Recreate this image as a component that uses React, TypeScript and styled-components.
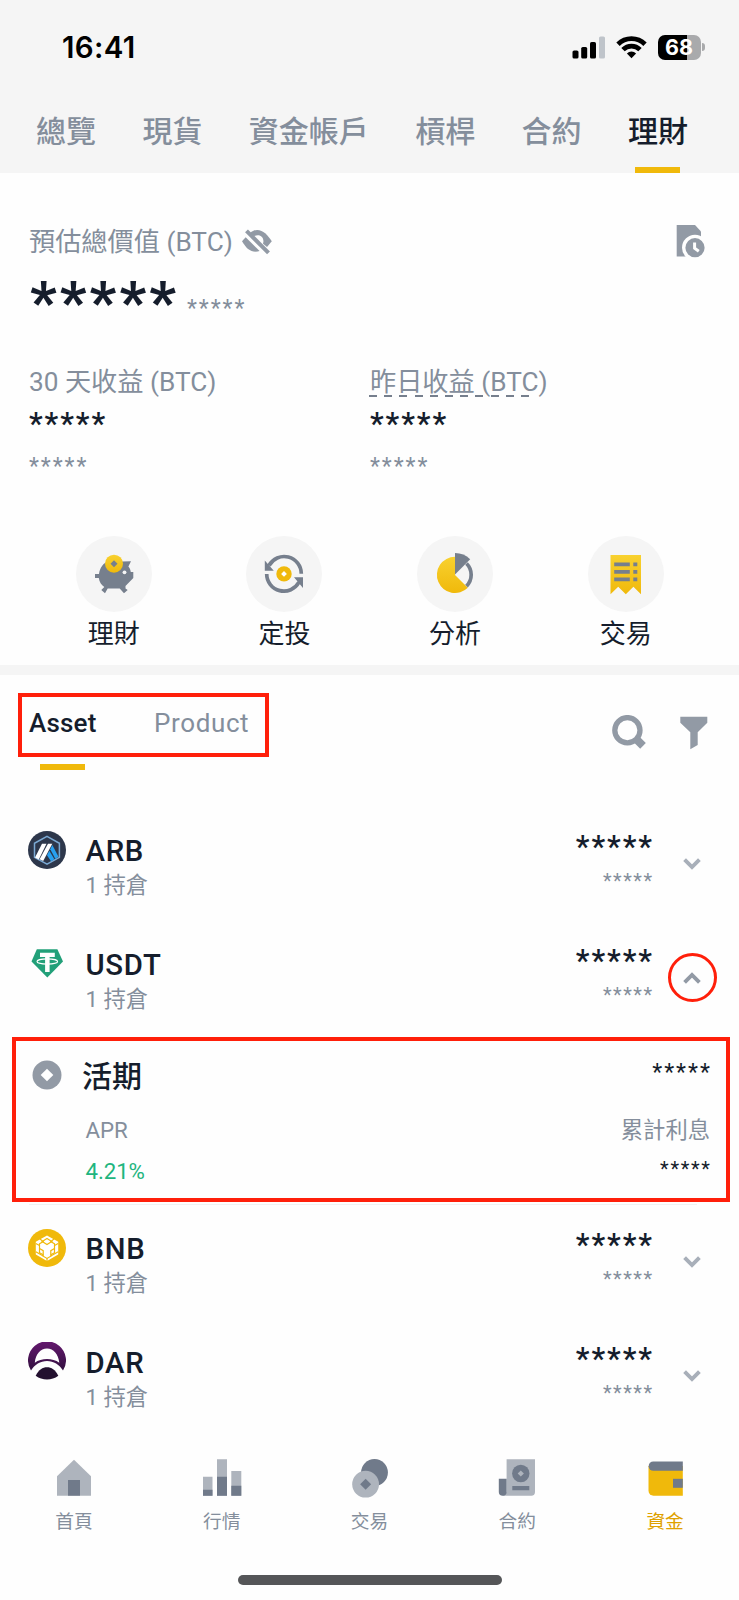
import React from "react";
import styled, { createGlobalStyle } from "styled-components";

const INK = "#151d2c";
const GREY = "#848e9c";
const ICON = "#929aa5";
const SLATE = "#767f8d";
const GOLD = "#f0b90b";
const RED = "#ff1f0a";
const PANEL = "#f5f5f5";

const GlobalStyle = createGlobalStyle`
  * { box-sizing: border-box; }
  body {
    margin: 0;
    background: #fefefe;
    color: ${INK};
    font-family: Roboto, "Noto Sans CJK TC", sans-serif;
  }
  svg { display: block; flex: none; }
`;

const Screen = styled.main`
  width: 739px;
  height: 1600px;
  overflow: hidden;
  display: flex;
  flex-direction: column;
`;

const Header = styled.header`
  height: 172.5px;
  background: ${PANEL};
`;

const StatusBar = styled.div`
  height: 94px;
  display: flex;
  justify-content: space-between;
  align-items: center;
  padding: 0 34.5px 0 62px;
`;

const Clock = styled.div`
  font: 600 29.5px/30px Inter, sans-serif;
  letter-spacing: 0.3px;
  color: #000;
`;

const StatusIcons = styled.div`
  display: flex;
  align-items: center;
  gap: 11px;
`;

const Battery = styled.div`
  display: flex;
  align-items: center;
  gap: 1px;
`;

const BatteryBody = styled.div`
  width: 43px;
  height: 25px;
  border-radius: 7px;
  background: linear-gradient(90deg, #000 68%, #a9aaac 68%);
  color: #fff;
  text-align: center;
  font: 700 21.5px/25px Inter, sans-serif;
`;

const BatteryNub = styled.div`
  width: 3px;
  height: 8px;
  border-radius: 0 4px 4px 0;
  background: #a9aaac;
`;

const AccountTabs = styled.nav`
  height: 78.5px;
  display: flex;
  gap: 46.4px;
  padding-left: 36px;
`;

const AccountTab = styled.div<{ $active?: boolean }>`
  display: flex;
  flex-direction: column;
  align-items: center;
  justify-content: space-between;
  padding-top: 16px;
  font-size: 30px;
  line-height: 44px;
  font-weight: 500;
  white-space: nowrap;
  color: ${(p) => (p.$active ? INK : GREY)};
`;

const TabMark = styled.div`
  width: 45px;
  height: 5.5px;
  background: ${GOLD};
`;

const Summary = styled.section`
  height: 363.5px;
  padding: 49.5px 34px 0 29px;
`;

const SummaryTop = styled.div`
  display: flex;
  justify-content: space-between;
  height: 39px;
  align-items: center;
`;

const Caption = styled.div`
  display: flex;
  align-items: center;
  gap: 9px;
  height: 40px;
  font-size: 26.2px;
  line-height: 40px;
  color: ${GREY};
  white-space: pre;
`;

const Dashed = styled.span`
  position: relative;
  &::after {
    content: "";
    position: absolute;
    left: -1px;
    bottom: 5px;
    width: 162px;
    height: 2px;
    background: repeating-linear-gradient(90deg, ${SLATE} 0 8px, transparent 8px 15.2px);
  }
`;

const Stars = styled.div<{ $size: number; $tone?: string; $weight?: number; $gap?: number }>`
  font-family: Roboto, sans-serif;
  font-size: ${(p) => p.$size}px;
  line-height: ${(p) => p.$size}px;
  height: ${(p) => p.$size}px;
  letter-spacing: ${(p) => p.$gap ?? 0.06}em;
  margin-right: ${(p) => -(p.$gap ?? 0.06)}em;
  font-weight: ${(p) => p.$weight ?? 400};
  color: ${(p) => p.$tone ?? INK};
`;

const TotalRow = styled.div`
  display: flex;
  height: 101px;
  padding: 12px 0 0 1px;
  gap: 11px;
`;

const TotalSub = styled.div`
  padding-top: 24px;
`;

const Earnings = styled.div`
  display: grid;
  grid-template-columns: 341px 1fr;
`;

const EarningsAmounts = styled.div`
  padding-top: 6px;
  display: flex;
  flex-direction: column;
  gap: 16px;
`;

const Actions = styled.section`
  height: 129px;
  padding: 0 28px 0 28.5px;
  display: grid;
  grid-template-columns: repeat(4, 1fr);
`;

const Action = styled.div`
  display: flex;
  flex-direction: column;
  align-items: center;
  font-size: 26px;
  line-height: 44px;
`;

const ActionDisc = styled.div`
  width: 76px;
  height: 76px;
  border-radius: 50%;
  background: ${PANEL};
`;

const Divider = styled.div`
  height: 10px;
  background: ${PANEL};
`;

const ListBar = styled.div`
  height: 133px;
  display: flex;
  justify-content: space-between;
  padding: 30px 31px 0 29px;
`;

const ListTabs = styled.div`
  position: relative;
  display: flex;
  gap: 57.5px;
  height: 64.5px;
`;

const ListTab = styled.div<{ $active?: boolean }>`
  display: flex;
  flex-direction: column;
  align-items: center;
  justify-content: space-between;
  font-size: 26px;
  line-height: 37px;
  letter-spacing: ${(p) => (p.$active ? 0.2 : 0.6)}px;
  font-weight: ${(p) => (p.$active ? 500 : 400)};
  color: ${(p) => (p.$active ? INK : GREY)};
`;

const TabOutline = styled.div`
  position: absolute;
  left: -11px;
  top: -12.5px;
  width: 250.5px;
  height: 64px;
  border: 4px solid ${RED};
`;

const Tools = styled.div`
  display: flex;
  gap: 34px;
  padding-top: 9.5px;
`;

const AssetRow = styled.div`
  height: 113.8px;
  display: flex;
  padding: 0 38px 0 28px;
`;

const Badge = styled.div`
  width: 57.5px;
  padding-top: 22.5px;
`;

const Names = styled.div`
  flex: 1;
  padding-top: 25px;
`;

const Symbol = styled.div`
  font-size: 29.3px;
  line-height: 36px;
  font-weight: 500;
  letter-spacing: 0.7px;
`;

const Holding = styled.div`
  font-size: 22.3px;
  line-height: 33px;
  color: ${GREY};
`;

const Amounts = styled.div`
  display: flex;
  flex-direction: column;
  align-items: flex-end;
  gap: 9px;
  padding-top: 23px;
`;

const Toggle = styled.div`
  position: relative;
  margin-left: 31px;
  padding-top: 50px;
`;

const ToggleRing = styled.div`
  position: absolute;
  left: -15px;
  top: 31.5px;
  width: 49px;
  height: 49px;
  border: 3.5px solid ${RED};
  border-radius: 50%;
`;

const Detail = styled.div`
  width: 718px;
  height: 165px;
  margin: 1.5px 0 2px 12px;
  padding: 0 16px;
  border: 4px solid ${RED};
  display: grid;
  grid-template-columns: 50px 1fr auto;
  grid-template-rows: 68px 41px 41px;
  align-items: center;
`;

const Plan = styled.div`
  font-size: 30px;
  line-height: 44px;
  font-weight: 500;
  padding-top: 3px;
`;

const DetailText = styled.div<{ $tone: string; $gap?: number }>`
  grid-column: 2;
  padding-left: 3.5px;
  font-size: 22.3px;
  line-height: 34px;
  letter-spacing: ${(p) => p.$gap ?? 0}px;
  color: ${(p) => p.$tone};
`;

const DetailValue = styled.div<{ $lift?: number }>`
  grid-column: 3;
  justify-self: end;
  font-size: 22.3px;
  line-height: 34px;
  color: ${GREY};
  padding-bottom: ${(p) => p.$lift ?? 0}px;
`;

const Hairline = styled.div`
  height: 1px;
  margin: 0 42px 1px 29px;
  background: #f1f1f1;
`;

const TabBar = styled.nav`
  margin-top: auto;
  height: 142px;
  display: grid;
  grid-template-columns: repeat(5, 1fr);
  grid-template-rows: 117px 10px;
`;

const TabItem = styled.div<{ $active?: boolean }>`
  display: flex;
  flex-direction: column;
  align-items: center;
  gap: 11px;
  font-size: 18.7px;
  line-height: 26px;
  color: ${(p) => (p.$active ? "#dfa100" : GREY)};
`;

const HomeBar = styled.div`
  grid-column: 1 / -1;
  justify-self: center;
  width: 264px;
  height: 10px;
  border-radius: 5px;
  background: #555658;
`;

const SignalIcon = () => (
  <svg width="33" height="23" viewBox="0 0 33 23">
    <rect x="0.5" y="14.5" width="6" height="8" rx="1.6" />
    <rect x="9.2" y="11" width="6" height="11.5" rx="1.6" />
    <rect x="18" y="6" width="6" height="16.5" rx="1.6" />
    <rect x="27" y="0.5" width="6" height="22" rx="1.6" fill="#bfc4ca" />
  </svg>
);

const WifiIcon = () => (
  <svg width="31" height="24" viewBox="0 0 31 24" fill="none" stroke="#000" strokeWidth="4.8">
    <path d="M2 9.2a19.2 19.2 0 0 1 27 0" />
    <path d="M7 14.6a12 12 0 0 1 17 0" />
    <path d="M15.5 23.2l-4.6-4.7a6.5 6.5 0 0 1 9.2 0z" fill="#000" stroke="none" />
  </svg>
);

const HiddenEyeIcon = () => (
  <svg width="30" height="26" viewBox="0 0 30 26">
    <path d="M8 4C10.500 2 12.500 1 15.200 1c6 0 10.500 5 14.600 11.300L25 18z" fill={ICON} />
    <path d="M11.700 7.500C18.500 3.800 23.500 9.500 20.500 16z" fill="#fefefe" />
    <path d="M0 12.200L3.700 8.200 17.600 22.100C9.500 24.300 4.600 20 0 12.200z" fill={ICON} />
    <path d="M2.600 4L24.800 26.200" stroke="#fefefe" strokeWidth="2.600" />
    <path d="M4.500 1.800L26.500 23.800" stroke={ICON} strokeWidth="4" />
  </svg>
);

const HistoryIcon = () => (
  <svg width="29" height="33" viewBox="0 0 29 33">
    <path d="M.7 0H19l6 6.5V31.5H.7z" fill={ICON} />
    <circle cx="19" cy="22.7" r="13" fill="#fefefe" />
    <circle cx="19" cy="22.7" r="9.6" fill={ICON} />
    <path d="M18.6 17.5v5.8l4.2 3" stroke="#fefefe" strokeWidth="3" fill="none" />
  </svg>
);

const Sunshine = ({ id }: { id: string }) => (
  <linearGradient id={id} x1="0" y1="0" x2="0" y2="1">
    <stop offset="0" stopColor="#f8d12f" />
    <stop offset="1" stopColor={GOLD} />
  </linearGradient>
);

const PigIcon = () => (
  <svg width="76" height="76" viewBox="0 0 76 76">
    <defs><Sunshine id="coin" /></defs>
    <path d="M19 38h4c.8-6 4-11.500 10-12.500h13l9-.2-2.600 5.200c1.500 1.500 2 3.200 2.400 5.500H57.300v6L49.500 50v2.500l2.200 1.500-3.700 3.300-4.300-4.800h-12L29 57.300 25.300 54l3-3c-3-2-5-5.200-5.500-9h-3.800z" fill={SLATE} />
    <circle cx="38" cy="27.700" r="9" fill="url(#coin)" />
    <path d="M38 24.200l3.500 3.500-3.500 3.500-3.500-3.500z" fill={SLATE} />
    <circle cx="48.500" cy="36.300" r="1.900" fill="#f5f5f5" />
  </svg>
);

const RecurringIcon = () => (
  <svg width="76" height="76" viewBox="0 0 76 76">
    <circle cx="38" cy="37.900" r="7.700" fill={GOLD} />
    <path d="M38 35l2.900 2.900L38 40.800l-2.900-2.900z" fill="#fff" />
    <g fill="none" stroke={SLATE} strokeWidth="3.700">
      <path d="M23 29.500a17.200 17.200 0 0 1 32.300 8.200" />
      <path d="M20.700 38a17.200 17.200 0 0 0 32.300 8.200" />
    </g>
    <path d="M18.800 24.500v10.200h9zM57 52V41.300h-9z" fill={SLATE} />
  </svg>
);

const PieIcon = () => (
  <svg width="76" height="76" viewBox="0 0 76 76">
    <defs><Sunshine id="pie" /></defs>
    <path d="M38 20.800V38.900L50.800 51.700A18.100 18.100 0 1 1 38 20.800z" fill="url(#pie)" />
    <path d="M38 17v21.500l15.200-15.200A21.500 21.500 0 0 0 38 17z" fill={SLATE} />
    <path d="M49.500 27.500a16 16 0 0 1 0 22.600" fill="none" stroke={SLATE} strokeWidth="3.700" />
  </svg>
);

const ReceiptIcon = () => (
  <svg width="76" height="76" viewBox="0 0 76 76">
    <defs><Sunshine id="receipt" /></defs>
    <path d="M22.500 19H53v39.200l-7.600-7.400-7.600 7.400-7.600-7.400-7.700 7.400z" fill="url(#receipt)" />
    <path d="M26.200 28.400h15.600M45.300 28.400h4M26.200 35.900h15.600M45.300 35.900h4M26.200 43.400h15.600M45.300 43.400h4" stroke={SLATE} strokeWidth="3.700" />
  </svg>
);

const SearchIcon = () => (
  <svg width="34" height="35" viewBox="0 0 34 35" fill="none" stroke={ICON}>
    <circle cx="15.400" cy="15.200" r="12.600" strokeWidth="5.300" />
    <path d="M24 23.800l7 7" strokeWidth="8" />
  </svg>
);

const FilterIcon = () => (
  <svg width="28" height="35" viewBox="0 0 28 35">
    <path d="M.3 1.700h27v6L17.700 17.300V30l-7.400 4.200V17.300L.3 7.700z" fill={ICON} />
  </svg>
);

const Chevron = ({ up }: { up?: boolean }) => (
  <svg width="18" height="12" viewBox="0 0 18 12" fill="none" stroke={up ? ICON : "#a8afb9"} strokeWidth="3.900">
    <path d={up ? "M1.600 10.300L9 2.900l7.400 7.400" : "M1.600 1.700L9 9.100l7.400-7.400"} />
  </svg>
);

const ArbLogo = () => (
  <svg width="38" height="38" viewBox="0 0 38 38">
    <circle cx="19" cy="19" r="19" fill="#2d374b" />
    <path d="M19 5.300l12.400 7v14L19 33.200 6.500 26.300v-14z" fill="none" stroke="#7ba9d3" strokeWidth="1.500" />
    <path d="M14 12.800h4.500L10.800 28.600 7 26.400z" fill="#fff" />
    <path d="M20 12.800h4.300L15.200 30l-3.600-1.800z" fill="#fff" />
    <path d="M24.300 14l6.200 11.800-3.200 2-5-9.600z" fill="#28a0f0" />
    <path d="M21.300 19.800l5.100 8.500-3.400 1.900-4-6z" fill="#28a0f0" />
  </svg>
);

const UsdtLogo = () => (
  <svg width="38" height="38" viewBox="0 0 38 38">
    <path d="M8.800 5.200h20.600l5.600 12.200L19.300 33.500 3.500 17.400z" fill="#22a079" />
    <path d="M12 8.800h14.800V13h-5.200v15h-4.500V13H12z" fill="#fff" />
    <ellipse cx="19.300" cy="17.500" rx="10.300" ry="2.600" fill="none" stroke="#fff" strokeWidth="1.100" />
  </svg>
);

const BnbLogo = () => (
  <svg width="38" height="38" viewBox="0 0 38 38">
    <circle cx="19" cy="19" r="19" fill={GOLD} />
    <path d="M19 6.500l11.200 6.300v12.700L19 31.900 7.800 25.500V12.800z" fill="#fff" />
    <g fill="none" stroke={GOLD} strokeWidth="1.200">
      <path d="M19 9.500l4.800 3L19 15.500l-4.800-3z" />
      <path d="M12 10l3.200 2.600-3.700 2.200v4.700l3.700 2.200v5.500l3.800 2.200 3.800-2.200v-5.500l3.700-2.200v-4.700l-3.700-2.200L26 10" />
      <path d="M7.800 14.500l3.700 2M30.200 14.500l-3.700 2M7.800 22.800l7.400 4.200M30.200 22.800L22.800 27" />
      <path d="M11.500 19.500v4.200l3.700 2M26.500 19.500v4.200l-3.700 2M19 29v3" />
    </g>
  </svg>
);

const DarLogo = () => (
  <svg width="38" height="38" viewBox="0 0 38 38">
    <defs>
      <linearGradient id="dusk" x1="0" y1="0" x2="0" y2="1">
        <stop offset="0" stopColor="#64186e" />
        <stop offset="1" stopColor="#32103f" />
      </linearGradient>
    </defs>
    <path d="M3 28.600A19 19 0 1 1 35 28.600C31.500 22.500 25.500 19 19 19S6.500 22.500 3 28.600z" fill="url(#dusk)" />
    <path d="M6.800 20.800C7.500 12.500 12.500 6.600 19 6.600s11.500 5.900 12.300 14.200C24.500 15.800 13.500 15.800 6.800 20.800z" fill="#fefefe" />
    <path d="M7.700 33.700C11 27.600 14.500 25.300 19 25.300s8 2.300 11.300 8.400A19 19 0 0 1 7.700 33.700z" fill="#23102f" />
  </svg>
);

const FlexibleIcon = () => (
  <svg width="30" height="30" viewBox="0 0 30 30">
    <circle cx="15" cy="15" r="14.500" fill={ICON} />
    <path d="M15 8.700l6.300 6.300-6.300 6.300L8.700 15z" fill="#fff" />
  </svg>
);

const PALE = "#aeb4bd";
const DEEP = "#707a8a";

const HomeIcon = () => (
  <svg width="40" height="40" viewBox="0 0 40 40">
    <path d="M3 18.300L20 1.800l17 16.500v19.400H3z" fill={PALE} />
    <path d="M14 22h12v15.700H14z" fill={DEEP} />
  </svg>
);

const MarketsIcon = () => (
  <svg width="40" height="40" viewBox="0 0 40 40">
    <path d="M1 18.700h9.500v19H1zM15 1.200h10v36.500H15zM29.300 13h10v24.700h-10z" fill={PALE} />
    <path d="M1 31.800h9.500v5.900H1zM15 18.700h10v19H15zM29.300 27.800h10v9.900h-10z" fill={DEEP} />
  </svg>
);

const TradeIcon = () => (
  <svg width="40" height="40" viewBox="0 0 40 40">
    <circle cx="25.500" cy="14.500" r="13.400" fill={DEEP} />
    <circle cx="16.600" cy="26.200" r="13.400" fill={PALE} />
    <path d="M16.600 20.700l5.500 5.500-5.500 5.500-5.500-5.500z" fill={DEEP} />
  </svg>
);

const FuturesIcon = () => (
  <svg width="40" height="40" viewBox="0 0 40 40">
    <path d="M9.600 1.200H38V34a3.700 3.700 0 0 1-3.700 3.700H5.500l4.100-4z" fill={PALE} />
    <path d="M1.800 20.800h7.800v13a3.900 3.900 0 0 1-7.800 0z" fill={DEEP} />
    <circle cx="23.800" cy="15.500" r="8.700" fill={DEEP} />
    <path d="M23.800 12.400l3.100 3.100-3.100 3.100-3.100-3.100z" fill={PALE} />
    <path d="M15.300 28h17v4.300h-17z" fill={DEEP} />
  </svg>
);

const WalletIcon = () => (
  <svg width="40" height="40" viewBox="0 0 40 40">
    <path d="M3.500 8h34.300v29.700H8.500a5 5 0 0 1-5-5z" fill={GOLD} />
    <path d="M8.300 3.500h29.500v9.300H8.300a4.650 4.650 0 0 1 0-9.300z" fill={DEEP} />
    <path d="M28 20.800h9.800v9H28z" fill={DEEP} />
  </svg>
);

const MASK = "*****";

type AssetProps = { symbol: string; logo: React.ReactNode; open?: boolean };

const Asset = ({ symbol, logo, open }: AssetProps) => (
  <AssetRow>
    <Badge>{logo}</Badge>
    <Names>
      <Symbol>{symbol}</Symbol>
      <Holding>1 持倉</Holding>
    </Names>
    <Amounts>
      <Stars $size={31} $weight={500}>{MASK}</Stars>
      <Stars $size={20} $gap={0.075} $tone={GREY}>{MASK}</Stars>
    </Amounts>
    <Toggle>
      <Chevron up={open} />
      {open && <ToggleRing />}
    </Toggle>
  </AssetRow>
);

const accounts = ["總覽", "現貨", "資金帳戶", "槓桿", "合約", "理財"];

const actions = [
  { label: "理財", icon: <PigIcon /> },
  { label: "定投", icon: <RecurringIcon /> },
  { label: "分析", icon: <PieIcon /> },
  { label: "交易", icon: <ReceiptIcon /> },
];

const tabs = [
  { label: "首頁", icon: <HomeIcon /> },
  { label: "行情", icon: <MarketsIcon /> },
  { label: "交易", icon: <TradeIcon /> },
  { label: "合約", icon: <FuturesIcon /> },
  { label: "資金", icon: <WalletIcon />, active: true },
];

export default function App() {
  return (
    <Screen>
      <GlobalStyle />
      <Header>
        <StatusBar>
          <Clock>16:41</Clock>
          <StatusIcons>
            <SignalIcon />
            <WifiIcon />
            <Battery>
              <BatteryBody>68</BatteryBody>
              <BatteryNub />
            </Battery>
          </StatusIcons>
        </StatusBar>
        <AccountTabs>
          {accounts.map((name) => (
            <AccountTab key={name} $active={name === "理財"}>
              {name}
              {name === "理財" && <TabMark />}
            </AccountTab>
          ))}
        </AccountTabs>
      </Header>

      <Summary>
        <SummaryTop>
          <Caption>
            預估總價值 (BTC)
            <HiddenEyeIcon />
          </Caption>
          <HistoryIcon />
        </SummaryTop>
        <TotalRow>
          <Stars $size={58} $weight={800} $gap={0.054}>{MASK}</Stars>
          <TotalSub>
            <Stars $size={23} $gap={0.085} $tone={GREY}>{MASK}</Stars>
          </TotalSub>
        </TotalRow>
        <Earnings>
          {["30 天收益 (BTC)", "昨日收益 (BTC)"].map((title, i) => (
            <div key={title}>
              <Caption>{i === 1 ? <Dashed>{title}</Dashed> : title}</Caption>
              <EarningsAmounts>
                <Stars $size={31} $weight={500}>{MASK}</Stars>
                <Stars $size={23} $gap={0.085} $tone={GREY}>{MASK}</Stars>
              </EarningsAmounts>
            </div>
          ))}
        </Earnings>
      </Summary>

      <Actions>
        {actions.map((a) => (
          <Action key={a.label}>
            <ActionDisc>{a.icon}</ActionDisc>
            {a.label}
          </Action>
        ))}
      </Actions>
      <Divider />

      <ListBar>
        <ListTabs>
          <ListTab $active>
            Asset
            <TabMark />
          </ListTab>
          <ListTab>Product</ListTab>
          <TabOutline />
        </ListTabs>
        <Tools>
          <SearchIcon />
          <FilterIcon />
        </Tools>
      </ListBar>

      <Asset symbol="ARB" logo={<ArbLogo />} />
      <Asset symbol="USDT" logo={<UsdtLogo />} open />
      <Detail>
        <FlexibleIcon />
        <Plan>活期</Plan>
        <DetailValue $lift={5}>
          <Stars $size={23} $gap={0.09}>{MASK}</Stars>
        </DetailValue>
        <DetailText $tone={GREY}>APR</DetailText>
        <DetailValue>累計利息</DetailValue>
        <DetailText $tone="#1fb57e" $gap={-0.1}>4.21%</DetailText>
        <DetailValue $lift={4}>
          <Stars $size={20} $gap={0.085}>{MASK}</Stars>
        </DetailValue>
      </Detail>
      <Hairline />
      <Asset symbol="BNB" logo={<BnbLogo />} />
      <Asset symbol="DAR" logo={<DarLogo />} />

      <TabBar>
        {tabs.map((t) => (
          <TabItem key={t.label} $active={t.active}>
            {t.icon}
            {t.label}
          </TabItem>
        ))}
        <HomeBar />
      </TabBar>
    </Screen>
  );
}
